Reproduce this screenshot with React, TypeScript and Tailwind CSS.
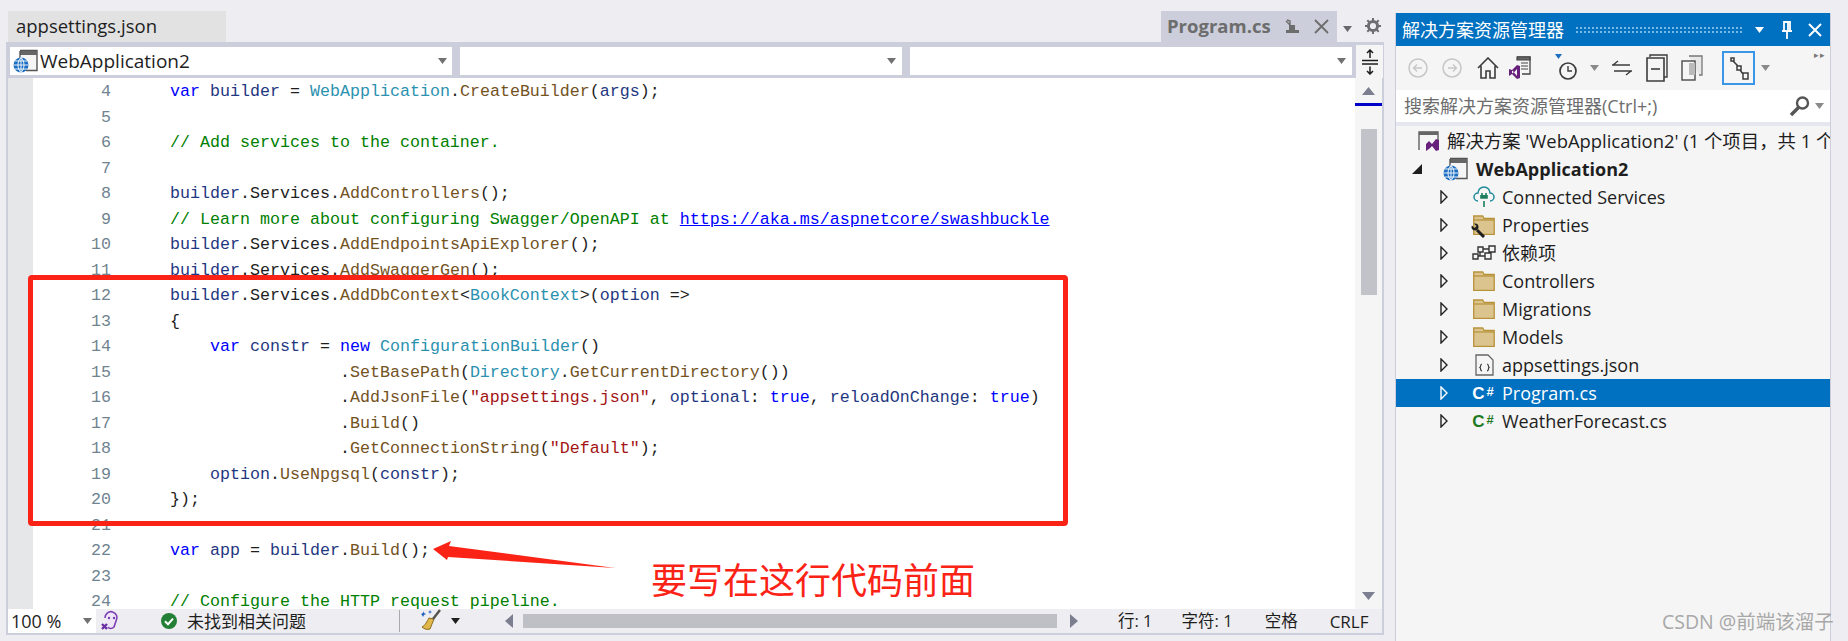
import type { ReactNode } from "react";

const uiFont = "font-['Open_Sans','Noto_Sans_CJK_SC',sans-serif]";

type Tok = [string, string];

const KW = "text-[#0000ff]";
const VAR = "text-[#1f377f]";
const TYPE = "text-[#2b91af]";
const FN = "text-[#74531f]";
const CM = "text-[#008000]";
const STR = "text-[#a31515]";
const PL = "text-[#1e1e1e]";

const lines: { n: number; indent?: number; toks?: Tok[] }[] = [
  { n: 4, toks: [["var", KW], [" ", PL], ["builder", VAR], [" = ", PL], ["WebApplication", TYPE], [".", PL], ["CreateBuilder", FN], ["(", PL], ["args", VAR], [");", PL]] },
  { n: 5 },
  { n: 6, toks: [["// Add services to the container.", CM]] },
  { n: 7 },
  { n: 8, toks: [["builder", VAR], [".", PL], ["Services", PL], [".", PL], ["AddControllers", FN], ["();", PL]] },
  { n: 9, toks: [["// Learn more about configuring Swagger/OpenAPI at ", CM], ["https://aka.ms/aspnetcore/swashbuckle", "text-[#0000ff] underline"]] },
  { n: 10, toks: [["builder", VAR], [".", PL], ["Services", PL], [".", PL], ["AddEndpointsApiExplorer", FN], ["();", PL]] },
  { n: 11, toks: [["builder", VAR], [".", PL], ["Services", PL], [".", PL], ["AddSwaggerGen", FN], ["();", PL]] },
  { n: 12, toks: [["builder", VAR], [".", PL], ["Services", PL], [".", PL], ["AddDbContext", FN], ["<", PL], ["BookContext", TYPE], [">(", PL], ["option", VAR], [" =>", PL]] },
  { n: 13, toks: [["{", PL]] },
  { n: 14, indent: 4, toks: [["var", KW], [" ", PL], ["constr", VAR], [" = ", PL], ["new", KW], [" ", PL], ["ConfigurationBuilder", TYPE], ["()", PL]] },
  { n: 15, indent: 17, toks: [[".", PL], ["SetBasePath", FN], ["(", PL], ["Directory", TYPE], [".", PL], ["GetCurrentDirectory", FN], ["())", PL]] },
  { n: 16, indent: 17, toks: [[".", PL], ["AddJsonFile", FN], ["(", PL], ["\"appsettings.json\"", STR], [", ", PL], ["optional", VAR], [": ", PL], ["true", KW], [", ", PL], ["reloadOnChange", VAR], [": ", PL], ["true", KW], [")", PL]] },
  { n: 17, indent: 17, toks: [[".", PL], ["Build", FN], ["()", PL]] },
  { n: 18, indent: 17, toks: [[".", PL], ["GetConnectionString", FN], ["(", PL], ["\"Default\"", STR], [");", PL]] },
  { n: 19, indent: 4, toks: [["option", VAR], [".", PL], ["UseNpgsql", FN], ["(", PL], ["constr", VAR], [");", PL]] },
  { n: 20, toks: [["});", PL]] },
  { n: 21 },
  { n: 22, toks: [["var", KW], [" ", PL], ["app", VAR], [" = ", PL], ["builder", VAR], [".", PL], ["Build", FN], ["();", PL]] },
  { n: 23 },
  { n: 24, toks: [["// Configure the HTTP request pipeline.", CM]] },
];

function WebIcon() {
  return (
    <svg width="26" height="26" viewBox="0 0 26 26" className="shrink-0">
      <path d="M7 2.5h17v20H13" fill="#f5f5f5" stroke="#555" strokeWidth="1.4" />
      <path d="M7 3h17v4H7z" fill="#666" />
      <path d="M7 3v8" stroke="#555" strokeWidth="1.4" />
      <circle cx="8" cy="17" r="7.5" fill="#1b6ec2" />
      <path d="M.5 17h15M8 9.5v15M2 13h12M2 21h12M8 9.5c-4 4-4 11 0 15M8 9.5c4 4 4 11 0 15" stroke="#fff" strokeWidth=".9" fill="none" />
    </svg>
  );
}

function Caret({ color = "#717171" }: { color?: string }) {
  return (
    <svg width="9" height="6" viewBox="0 0 9 6" className="shrink-0">
      <path d="M0 0h9L4.5 6z" fill={color} />
    </svg>
  );
}

function Folder() {
  return (
    <svg width="22" height="20" viewBox="0 0 22 20">
      <path d="M.7 3.5V1h9l1.5 2.5h10v15.8H.7z" fill="#dcc48e" stroke="#b8923a" strokeWidth="1.3" />
      <path d="M.7 5h20.5" stroke="#b8923a" strokeWidth="1.2" />
    </svg>
  );
}

function Hash({ color }: { color: string }) {
  return (
    <span className={`font-['Liberation_Sans',sans-serif] text-[17px] leading-none tracking-[2px] font-semibold ${color}`}>
      C<span className="text-[13px] align-[3px]">#</span>
    </span>
  );
}

function TreeRow({ icon, label, selected }: { icon: ReactNode; label: string; selected?: boolean }) {
  return (
    <div className={`flex h-[28px] items-center pl-[44px] ${selected ? "bg-[#0070c0] text-white" : "text-[#1e1e1e]"}`}>
      <svg width="8" height="14" viewBox="0 0 8 14" className="shrink-0">
        <path d="M1 1l6 6-6 6z" fill={selected ? "#0070c0" : "#f5f5f5"} stroke={selected ? "#fff" : "#222"} strokeWidth="1.4" />
      </svg>
      <span className="ml-[24px] flex w-[24px] shrink-0 items-center justify-center">{icon}</span>
      <span className="ml-[6px] text-[18px] leading-none">{label}</span>
    </div>
  );
}

function ToolSep() {
  return <span className="h-[32px] w-[2px] shrink-0 bg-[#d3d4da]" />;
}

export default function App() {
  return (
    <div className={`relative flex h-[641px] w-[1848px] overflow-hidden bg-[#eeeef2] ${uiFont}`}>
      {/* document well */}
      <div className="ml-[6px] flex w-[1378px] shrink-0 flex-col">
        <div className="flex h-[42px] shrink-0 items-end pl-[2px]">
          <div className="flex h-[31px] w-[218px] items-center bg-[#e2e2e2] pl-[8px] text-[18.5px] leading-none text-[#1e1e1e]">appsettings.json</div>
          <div className="ml-[935px] flex h-[31px] w-[176px] items-center bg-[#cccedb] pl-[6px] text-[#6d6d6d]">
            <span className="text-[18.5px] font-bold leading-none">Program.cs</span>
            <svg width="15" height="15" viewBox="0 0 15 15" className="ml-[14px]">
              <path d="M1 14h13v-3H1z" fill="#6d6d6d" />
              <path d="M4 11V6h6v5" fill="#6d6d6d" />
              <path d="M1 2l4 4M2 1l3 1v4" stroke="#6d6d6d" strokeWidth="1.4" fill="none" />
            </svg>
            <svg width="15" height="15" viewBox="0 0 15 15" className="ml-[14px]">
              <path d="M1 1l13 13M14 1L1 14" stroke="#6d6d6d" strokeWidth="1.8" />
            </svg>
          </div>
          <div className="ml-[6px] mb-[10px]"><Caret color="#68686e" /></div>
          <svg width="16" height="16" viewBox="0 0 16 16" className="ml-[13px] mb-[8px]">
            <circle cx="8" cy="8" r="4.6" fill="none" stroke="#6d6d73" strokeWidth="3" />
            <path d="M8 0v3M8 13v3M0 8h3M13 8h3M2.3 2.3l2 2M11.7 11.7l2 2M13.7 2.3l-2 2M4.3 11.7l-2 2" stroke="#6d6d73" strokeWidth="2" />
          </svg>
        </div>

        <div className="flex h-[36px] shrink-0 bg-[#cccedb] pt-[5px] pl-[4px]">
          <div className="flex h-[28px] w-[442px] items-center bg-white pl-[3px] pr-[2px]">
            <WebIcon />
            <span className="ml-[1px] text-[19px] leading-none text-[#1e1e1e]">WebApplication2</span>
            <span className="ml-auto mr-[3px]"><Caret /></span>
          </div>
          <div className="ml-[8px] flex h-[28px] w-[442px] items-center justify-end bg-white pr-[6px]"><Caret /></div>
          <div className="ml-[8px] flex h-[28px] w-[442px] items-center justify-end bg-white pr-[6px]"><Caret /></div>
          <div className="-mt-[2px] ml-[4px] flex h-[33px] w-[27px] items-center justify-center bg-[#f5f5f5]">
            <svg width="18" height="26" viewBox="0 0 18 26">
              <path d="M1 11.5h16M1 15h16M9 1v8M9 17.5V25M6 4l3-3 3 3M6 22l3 3 3-3" fill="none" stroke="#1e1e1e" strokeWidth="1.5" />
            </svg>
          </div>
        </div>

        <div className="flex h-[531px] shrink-0 bg-[#cccedb] pl-[2px] pr-[2px]">
          <div className="w-[25px] shrink-0 bg-[#e6e7e8]" />
          <div className="min-w-0 flex-1 overflow-hidden bg-white pt-[2px] font-['Liberation_Mono','Noto_Sans_CJK_SC',monospace] text-[16.67px]">
            {lines.map((l) => (
              <div key={l.n} className="flex h-[25.5px] items-center whitespace-pre leading-none">
                <span className="w-[78px] shrink-0 text-right text-[#6f8390]">{l.n}</span>
                <span className="ml-[59px]">
                  {" ".repeat(l.indent ?? 0)}
                  {l.toks?.map((t, i) => (
                    <span key={i} className={t[1]}>{t[0]}</span>
                  ))}
                </span>
              </div>
            ))}
          </div>
          <div className="relative flex w-[27px] shrink-0 flex-col items-center bg-[#f5f5f5]">
            <div className="mt-[9px]"><svg width="13" height="8" viewBox="0 0 13 8"><path d="M6.5 0L13 8H0z" fill="#7b7f8f" /></svg></div>
            <div className="mt-[8px] h-[3px] w-full bg-[#0000c8]" />
            <div className="mt-[23px] h-[166px] w-[16px] bg-[#c2c3c9]" />
            <div className="mt-auto mb-[9px]"><svg width="13" height="8" viewBox="0 0 13 8"><path d="M0 0h13L6.5 8z" fill="#7b7f8f" /></svg></div>
          </div>
        </div>

        <div className="flex h-[26px] shrink-0 items-center border-b-[2px] border-x-[2px] border-[#cccedb] bg-[#eeeef2] text-[#1e1e1e]">
          <div className="flex h-[24px] w-[88px] items-center bg-white pl-[3px] text-[18px] leading-none">
            100 %
            <span className="ml-auto mr-[4px]"><Caret /></span>
          </div>
          <svg width="20" height="22" viewBox="0 0 20 22" className="ml-[5px]">
            <path d="M4 8a6 6 0 1 1 11 3l-2 6c-2 2-5 2-6 0" fill="#efe7f7" stroke="#7a3fb5" strokeWidth="1.6" />
            <path d="M1 14l5 5M1 19l5-5" stroke="#6a2fa5" strokeWidth="2.4" />
            <circle cx="8" cy="8" r="1.2" fill="#7a3fb5" />
            <circle cx="13" cy="8" r="1.2" fill="#7a3fb5" />
          </svg>
          <svg width="16" height="16" viewBox="0 0 16 16" className="ml-[40px]">
            <circle cx="8" cy="8" r="8" fill="#237f35" />
            <path d="M4 8.2l3 3 5-5.6" fill="none" stroke="#fff" strokeWidth="2" />
          </svg>
          <span className="ml-[10px] w-[212px] text-[17px] leading-none">未找到相关问题</span>
          <span className="h-[22px] w-[1px] bg-[#a9a9b0]" />
          <svg width="22" height="24" viewBox="0 0 22 24" className="ml-[21px]">
            <path d="M13 10L9 20c-3 1-6 0-8-2 3-1 5-6 7-9z" fill="#e0b84a" stroke="#8a6a1e" strokeWidth="1" />
            <path d="M12 10l7-9" stroke="#57534a" strokeWidth="2.4" />
            <path d="M2 2l1 2 2 1-2 1-1 2-1-2-1-1 2-1zM9 1l.6 1.4L11 3l-1.4.6L9 5l-.6-1.4L7 3l1.4-.6z" fill="#1f5fbf" />
          </svg>
          <span className="ml-[8px]"><Caret color="#1e1e1e" /></span>
          <svg width="9" height="14" viewBox="0 0 9 14" className="ml-[45px]"><path d="M8 0v14L0 7z" fill="#7b7f8f" /></svg>
          <div className="ml-[9px] h-[14px] w-[534px] bg-[#bfc0c6]" />
          <svg width="8" height="14" viewBox="0 0 8 14" className="ml-[13px]"><path d="M0 0v14l8-7z" fill="#7b7f8f" /></svg>
          <span className="ml-[40px] text-[16.5px] leading-none">行: 1</span>
          <span className="ml-[29px] text-[16.5px] leading-none">字符: 1</span>
          <span className="ml-[32px] text-[16.5px] leading-none">空格</span>
          <span className="ml-[32px] text-[17px] leading-none">CRLF</span>
        </div>
      </div>

      {/* solution explorer */}
      <div className="ml-[11px] mt-[13px] flex h-[628px] w-[436px] shrink-0 flex-col border-x border-[#cccedb] bg-[#f5f5f5]">
        <div className="flex h-[33px] shrink-0 items-center bg-[#0070c0] pl-[6px] text-white">
          <span className="text-[18px] leading-none">解决方案资源管理器</span>
          <span className="ml-[11px] h-[8px] w-[168px] bg-[radial-gradient(#7db8e6_1px,transparent_1px)] bg-[length:4px_4px]" />
          <span className="ml-[12px]"><Caret color="#ffffff" /></span>
          <svg width="12" height="20" viewBox="0 0 12 20" className="ml-[17px]">
            <path d="M3 2h6v9H3zM1 11h10M6 11v8M7 2v9" fill="none" stroke="#fff" strokeWidth="1.8" />
          </svg>
          <svg width="14" height="14" viewBox="0 0 14 14" className="ml-[15px]">
            <path d="M1 1l12 12M13 1L1 13" stroke="#fff" strokeWidth="2" />
          </svg>
        </div>

        <div className="relative flex h-[44px] shrink-0 items-center pl-[12px]">
          <svg width="20" height="20" viewBox="0 0 20 20"><circle cx="10" cy="10" r="9" fill="none" stroke="#c6c6c6" strokeWidth="1.5" /><path d="M14 10H6M9 6.5L5.5 10 9 13.5" fill="none" stroke="#c6c6c6" strokeWidth="1.3" /></svg>
          <svg width="20" height="20" viewBox="0 0 20 20" className="ml-[14px]"><circle cx="10" cy="10" r="9" fill="none" stroke="#c6c6c6" strokeWidth="1.5" /><path d="M6 10h8M11 6.5l3.5 3.5-3.5 3.5" fill="none" stroke="#c6c6c6" strokeWidth="1.3" /></svg>
          <svg width="22" height="22" viewBox="0 0 22 22" className="ml-[15px]"><path d="M1 11L11 1l10 10M4 9v12h5v-7h4v7h5V9" fill="none" stroke="#3c3c3c" strokeWidth="1.6" /></svg>
          <svg width="24" height="24" viewBox="0 0 24 24" className="ml-[9px]">
            <path d="M9 1h13v17H14" fill="#f5f5f5" stroke="#444" strokeWidth="1.3" />
            <path d="M9 1h13v3H9zM13 7h7M13 10h7M13 13h7" stroke="#444" fill="#666" strokeWidth="1.2" />
            <path d="M1 13v7l3-2 5 5 3-1V10l-3-1-5 5z M4 14.5v3l2-1.5z M9 13v7l-3-3.5z" fill="#68217a" fillRule="evenodd" />
          </svg>
          <span className="ml-[11px]"><ToolSep /></span>
          <svg width="26" height="28" viewBox="0 0 26 28" className="ml-[12px]">
            <path d="M0 0h7L3.5 5z" fill="#1f6fc0" />
            <circle cx="13" cy="17" r="8" fill="#f5f5f5" stroke="#3c3c3c" strokeWidth="1.7" />
            <path d="M13 12v5h4" fill="none" stroke="#3c3c3c" strokeWidth="1.4" />
          </svg>
          <span className="ml-[9px]"><Caret color="#8a8a8a" /></span>
          <svg width="20" height="16" viewBox="0 0 20 16" className="ml-[13px]"><path d="M0 5h18M6 1L1 5M20 11H2M14 15l5-4" fill="none" stroke="#3c3c3c" strokeWidth="1.4" /></svg>
          <svg width="22" height="28" viewBox="0 0 22 28" className="ml-[14px]"><path d="M4 3V1h17v22h-3" fill="none" stroke="#3c3c3c" strokeWidth="1.4" /><path d="M1 4h17v23H1z" fill="#f5f5f5" stroke="#3c3c3c" strokeWidth="1.6" /><path d="M5 15h9" stroke="#3c3c3c" strokeWidth="1.6" /></svg>
          <svg width="22" height="26" viewBox="0 0 22 26" className="ml-[13px]"><path d="M8 1h13v19h-3" fill="#e8e8e8" stroke="#777" strokeWidth="1.3" /><path d="M1 6h13v19H1z" fill="#f5f5f5" stroke="#555" strokeWidth="1.5" /><path d="M8 8h6v12H8z" fill="#bbb" /></svg>
          <span className="ml-[10px]"><ToolSep /></span>
          <div className="ml-[9px] flex h-[34px] w-[33px] items-center justify-center border-2 border-[#3a97e8]">
            <svg width="22" height="26" viewBox="0 0 22 26"><path d="M3 3h3v3H3zM9 11h4v4H9zM15 18h5v6h-5zM5 6l5 5M12 15l3 4" fill="none" stroke="#3c3c3c" strokeWidth="1.5" /></svg>
          </div>
          <span className="ml-[6px]"><Caret color="#8a8a8a" /></span>
          <span className="ml-[10px]"><ToolSep /></span>
          <span className="absolute right-[4px] top-[4px] text-[9px] leading-none tracking-[1px] text-[#777]">▸▸</span>
        </div>

        <div className="flex h-[32px] shrink-0 items-center bg-white pl-[8px] pr-[6px] text-[#6d6d6d]">
          <span className="text-[18px] leading-none">搜索解决方案资源管理器(Ctrl+;)</span>
          <svg width="22" height="22" viewBox="0 0 22 22" className="ml-auto">
            <circle cx="13.5" cy="8" r="5.5" fill="none" stroke="#555" strokeWidth="2.4" />
            <path d="M9.5 12.5L2 20" stroke="#555" strokeWidth="3.4" />
          </svg>
          <span className="ml-[4px]"><Caret color="#8a8a8a" /></span>
        </div>

        <div className="h-[4px] shrink-0 bg-[#e6e7ee]" />

        <div className="overflow-hidden whitespace-nowrap pt-[1px] text-[#1e1e1e]">
          <div className="flex h-[28px] items-center pl-[22px]">
            <svg width="22" height="22" viewBox="0 0 22 22" className="shrink-0">
              <path d="M1 20V2h19v8" fill="#f5f5f5" stroke="#555" strokeWidth="1.3" />
              <path d="M1 2h19v3H1z" fill="#666" />
              <path d="M8 14v7l3-2 3-3 4 5 3-1V10l-3-1-4 5-3-3z" fill="#68217a" />
            </svg>
            <span className="ml-[7px] text-[18.4px] leading-none">解决方案 'WebApplication2' (1 个项目，共 1 个项目)</span>
          </div>
          <div className="flex h-[28px] items-center pl-[16px]">
            <svg width="10" height="10" viewBox="0 0 10 10" className="shrink-0"><path d="M10 0v10H0z" fill="#1e1e1e" /></svg>
            <span className="ml-[21px]"><WebIcon /></span>
            <span className="ml-[7px] text-[18px] font-bold leading-none">WebApplication2</span>
          </div>
          <TreeRow
            label="Connected Services"
            icon={
              <svg width="22" height="22" viewBox="0 0 22 22">
                <path d="M5 15a4 4 0 0 1 0-8 6 6 0 0 1 12 0 4 4 0 0 1 0 8" fill="#f5f5f5" stroke="#1f8a9a" strokeWidth="1.5" />
                <path d="M8 9v3h6V9M11 15v6M9 7v2M13 7v2" stroke="#1d7f5f" fill="#1d7f5f" strokeWidth="1.6" />
              </svg>
            }
          />
          <TreeRow
            label="Properties"
            icon={
              <span className="relative block h-[20px] w-[22px]">
                <Folder />
                <svg width="15" height="15" viewBox="0 0 15 15" className="absolute -left-[2px] top-[8px]">
                  <path d="M6 7l7 7" stroke="#1e1e1e" strokeWidth="3" />
                  <path d="M1 2.5L3.5 5l2-2L3 .8C5 0 8 1 7.5 4.5S3 8 1.5 6.500 .5 3.500 1 2.500z" fill="#1e1e1e" />
                </svg>
              </span>
            }
          />
          <TreeRow
            label="依赖项"
            icon={
              <svg width="24" height="16" viewBox="0 0 24 16">
                <path d="M1 9h5v5H1zM6 2h5v5H6zM13 8h6v6h-6zM17 1h6v6h-6zM6 11h7M11 4h6M8 7v4" fill="none" stroke="#333" strokeWidth="1.4" />
              </svg>
            }
          />
          <TreeRow label="Controllers" icon={<Folder />} />
          <TreeRow label="Migrations" icon={<Folder />} />
          <TreeRow label="Models" icon={<Folder />} />
          <TreeRow
            label="appsettings.json"
            icon={
              <svg width="19" height="22" viewBox="0 0 19 22">
                <path d="M1 1h12l5 5v15H1z" fill="#f5f5f5" stroke="#666" strokeWidth="1.3" />
                <path d="M7 10c-2 0-1 3-2 3.5 1 .5 0 3.5 2 3.5M12 10c2 0 1 3 2 3.5-1 .5 0 3.5-2 3.5" fill="none" stroke="#333" strokeWidth="1.2" />
              </svg>
            }
          />
          <TreeRow label="Program.cs" selected icon={<Hash color="text-white" />} />
          <TreeRow label="WeatherForecast.cs" icon={<Hash color="text-[#1f7a1f]" />} />
        </div>
      </div>

      {/* annotation over the editor */}
      <div className="absolute left-[28px] top-[275px] h-[251px] w-[1040px] rounded-[4px] border-[5px] border-[#fb2316]" />
      <svg width="190" height="34" viewBox="0 0 190 34" className="absolute left-[430px] top-[538px]">
        <path d="M3 11L21 3l-2 5 166 22L18 19l-1 3z" fill="#fb2316" />
      </svg>
      <div className="absolute left-[651px] top-[560px] text-[36px] leading-[42px] text-[#fb2316]">要写在这行代码前面</div>
      <div className="absolute left-[1662px] top-[611px] text-[19.5px] leading-[22px] text-[#a8a8a8]">CSDN @前端该溜子</div>
    </div>
  );
}
